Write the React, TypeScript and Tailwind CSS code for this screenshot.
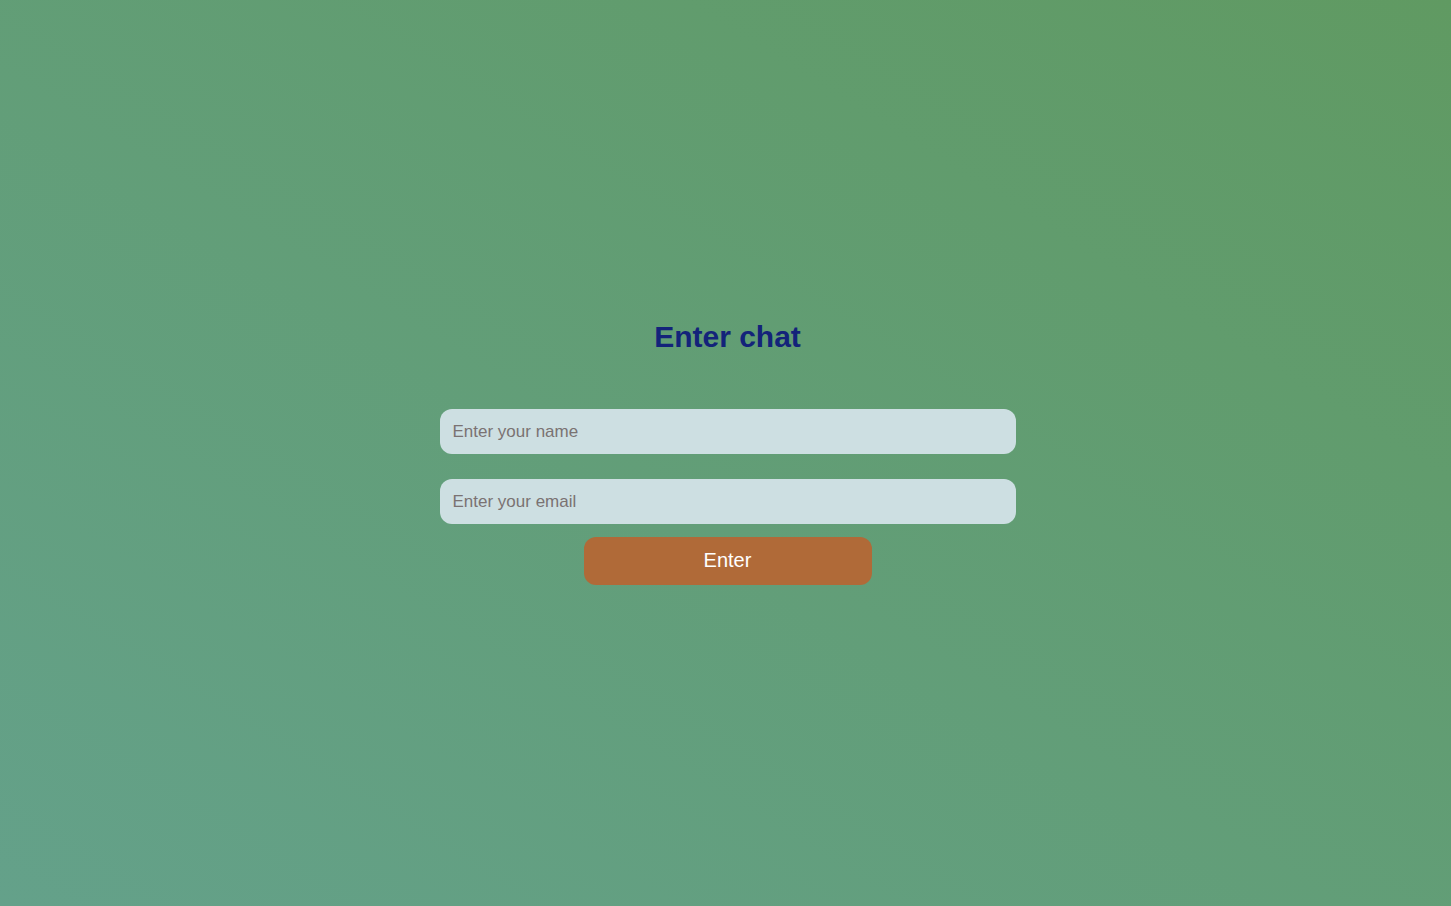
import React from "react";

export default function App() {
  return (
    <div className="min-h-screen w-full pl-[4px] pb-[2px] flex flex-col items-center justify-center bg-gradient-to-tr from-[#64a18a] to-[#609a62] font-['Liberation_Sans',Arial,sans-serif]">
      <h1 className="text-[30px] leading-[34px] font-bold text-[#13237a] mb-[55px]">Enter chat</h1>
      <form className="w-[576px] flex flex-col items-center" onSubmit={(e) => e.preventDefault()}>
        <input
          type="text"
          placeholder="Enter your name"
          className="w-full h-[45px] rounded-[12px] bg-[#cddfe2] px-[13px] pt-[2px] text-[17px] text-[#333] placeholder:text-[#7a7272] outline-none"
        />
        <input
          type="email"
          placeholder="Enter your email"
          className="w-full h-[45px] mt-[25px] rounded-[12px] bg-[#cddfe2] px-[13px] pt-[2px] text-[17px] text-[#333] placeholder:text-[#7a7272] outline-none"
        />
        <button
          type="submit"
          className="w-[288px] h-[48px] mt-[13px] pb-[2px] rounded-[12px] bg-[#b06a38] text-white text-[20px]"
        >
          Enter
        </button>
      </form>
    </div>
  );
}
